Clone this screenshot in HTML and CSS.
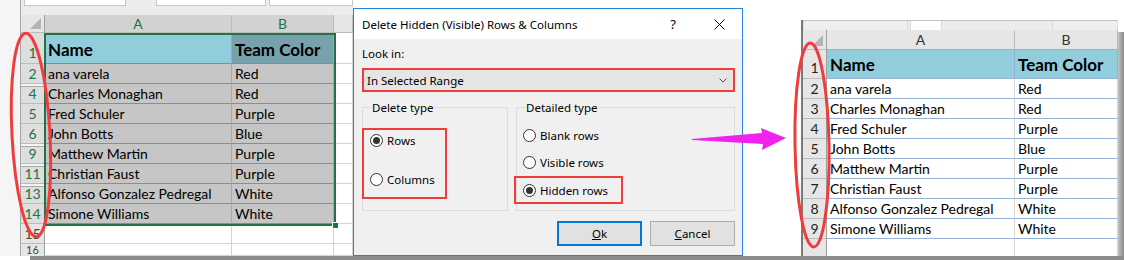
FILE: index.html
```html
<!DOCTYPE html>
<html>
<head>
  <title>Delete Hidden Rows</title>
  <meta charset="UTF-8">
  <link rel="stylesheet" href="styles.css">
</head>
<body>
  <div class="stage">
    <!-- Feuille de départ, avec lignes masquées -->
    <section class="sheet sheet-left">
      <div class="gutter"></div>
      <div class="grid">
        <div class="fbar">
          <span class="fbox b1"></span><span class="fbox b2"></span><span class="fbox b3"></span>
        </div>
        <div class="row head">
          <div class="rh corner"><i class="tri"></i></div>
          <div class="c a">A</div><div class="c b">B</div><div class="c x"></div>
        </div>
        <div class="row r1 sel">
          <div class="rh">1</div><div class="c a active">Name</div><div class="c b">Team Color</div><div class="c x"></div>
        </div>
        <div class="row sel"><div class="rh">2</div><div class="c a">ana varela</div><div class="c b">Red</div><div class="c x"></div></div>
        <div class="row sel"><div class="rh hid">4</div><div class="c a">Charles Monaghan</div><div class="c b">Red</div><div class="c x"></div></div>
        <div class="row sel"><div class="rh">5</div><div class="c a">Fred Schuler</div><div class="c b">Purple</div><div class="c x"></div></div>
        <div class="row sel"><div class="rh">6</div><div class="c a">John Botts</div><div class="c b">Blue</div><div class="c x"></div></div>
        <div class="row sel"><div class="rh hid">9</div><div class="c a">Matthew Martin</div><div class="c b">Purple</div><div class="c x"></div></div>
        <div class="row sel"><div class="rh hid">11</div><div class="c a">Christian Faust</div><div class="c b">Purple</div><div class="c x"></div></div>
        <div class="row sel"><div class="rh hid">13</div><div class="c a">Alfonso Gonzalez Pedregal</div><div class="c b">White</div><div class="c x"></div></div>
        <div class="row sel"><div class="rh">14</div><div class="c a">Simone Williams</div><div class="c b">White</div><div class="c x"></div></div>
        <div class="row"><div class="rh">15</div><div class="c a"></div><div class="c b"></div><div class="c x"></div></div>
        <div class="row last"><div class="rh">16</div><div class="c a"></div><div class="c b"></div><div class="c x"></div></div>
        <div class="selbox"><i class="handle"></i></div>
      </div>
    </section>

    <!-- Boîte de dialogue -->
    <div class="dialog">
      <div class="titlebar">
        <span class="title">Delete Hidden (Visible) Rows &amp; Columns</span>
        <span class="tb-btn">?</span>
        <span class="tb-btn">
          <svg width="11" height="11" viewBox="0 0 11 11"><path d="M0.5 0.5 L10.5 10.5 M10.5 0.5 L0.5 10.5" stroke="#000" stroke-width="1" fill="none"/></svg>
        </span>
      </div>
      <div class="dlg-body">
        <div class="label">Look in:</div>
        <div class="combo mark">
          <span>In Selected Range</span>
          <svg width="8" height="5" viewBox="0 0 8 5"><path d="M0.5 0.5 L4 4 L7.5 0.5" stroke="#555" stroke-width="1" fill="none"/></svg>
        </div>
        <div class="groups">
          <div class="group g-left">
            <span class="g-title">Delete type</span>
            <div class="mark box-type">
              <div class="opt"><i class="radio on"></i>Rows</div>
              <div class="opt"><i class="radio"></i>Columns</div>
            </div>
          </div>
          <div class="group g-right">
            <span class="g-title">Detailed type</span>
            <div class="opt first"><i class="radio"></i>Blank rows</div>
            <div class="opt second"><i class="radio"></i>Visible rows</div>
            <div class="mark box-hidden">
              <div class="opt"><i class="radio on"></i>Hidden rows</div>
            </div>
          </div>
        </div>
        <div class="buttons">
          <div class="btn ok"><span><u>O</u>k</span></div>
          <div class="btn"><span><u>C</u>ancel</span></div>
        </div>
      </div>
    </div>

    <!-- Feuille résultat -->
    <section class="sheet sheet-right">
      <div class="grid">
        <div class="fbar">
          <span class="fbox r-b1"></span><span class="fbox r-b2"></span><span class="fbox r-b3"></span>
        </div>
        <div class="row head">
          <div class="rh corner"><i class="tri"></i></div>
          <div class="c a">A</div><div class="c b">B</div>
        </div>
        <div class="row r1">
          <div class="rh">1</div><div class="c a hdr">Name</div><div class="c b hdr">Team Color</div>
        </div>
        <div class="row"><div class="rh">2</div><div class="c a">ana varela</div><div class="c b">Red</div></div>
        <div class="row"><div class="rh">3</div><div class="c a">Charles Monaghan</div><div class="c b">Red</div></div>
        <div class="row"><div class="rh">4</div><div class="c a">Fred Schuler</div><div class="c b">Purple</div></div>
        <div class="row"><div class="rh">5</div><div class="c a">John Botts</div><div class="c b">Blue</div></div>
        <div class="row"><div class="rh">6</div><div class="c a">Matthew Martin</div><div class="c b">Purple</div></div>
        <div class="row"><div class="rh">7</div><div class="c a">Christian Faust</div><div class="c b">Purple</div></div>
        <div class="row"><div class="rh">8</div><div class="c a">Alfonso Gonzalez Pedregal</div><div class="c b">White</div></div>
        <div class="row"><div class="rh">9</div><div class="c a">Simone Williams</div><div class="c b">White</div></div>
        <div class="row tail"><div class="rh"></div><div class="c a"></div><div class="c b"></div></div>
      </div>
    </section>
    <div class="shadow"></div>
  </div>
  <div class="band"></div>

  <!-- Annotations : ellipses et flèche -->
  <svg class="annot" width="1124" height="260" viewBox="0 0 1124 260">
    <ellipse cx="31" cy="135" rx="19" ry="102" transform="rotate(-3 31 135)" fill="none" stroke="#f23b3b" stroke-width="3"/>
    <ellipse cx="812" cy="145" rx="17" ry="102" transform="rotate(-1 812 145)" fill="none" stroke="#f23b3b" stroke-width="3"/>
    <polygon points="692,139 762,133 761,128 786,138 762,150 763,144 692,140" fill="#f022ee"/>
  </svg>
</body>
</html>
```

FILE: styles.css
```css
body {
  margin: 0;
  width: 1124px;
  height: 260px;
  overflow: hidden;
  position: relative;
  background: #fff;
  font-family: Lato, "Liberation Sans", sans-serif;
  color: #000;
}
.stage {
  display: flex;
  height: 256px;
}
.band {
  height: 4px;
  margin-left: 30px;
  background: #8c8c8c;
}
.annot {
  position: absolute;
  left: 0;
  top: 0;
  pointer-events: none;
}

/* feuilles */
.sheet {
  display: flex;
  flex: none;
  font-size: 14px;
}
.grid {
  position: relative;
  display: flex;
  flex-direction: column;
  flex: 1;
  overflow: hidden;
}
.fbar {
  display: flex;
  flex: none;
  background: #ececec;
}
.fbox {
  display: block;
  background: #fff;
  border: 1px solid #c6c6c6;
  border-top: none;
}
.row {
  display: flex;
  flex: none;
  height: 20px;
}
.rh {
  width: 24px;
  flex: none;
  box-sizing: border-box;
  background: #e6e6e6;
  border-right: 1px solid #9e9e9e;
  border-bottom: 1px solid #bcbcbc;
  text-align: center;
  line-height: 20px;
  color: #444;
}
.c {
  box-sizing: border-box;
  flex: none;
  border-right: 1px solid #d4d4d4;
  border-bottom: 1px solid #d4d4d4;
  padding-left: 3px;
  line-height: 20px;
  white-space: nowrap;
  overflow: hidden;
}
.c.x {
  flex: 1;
}
.head .c {
  background: #e6e6e6;
  border-color: #bcbcbc;
  text-align: center;
  padding-left: 0;
  color: #333;
}
.corner {
  position: relative;
}
.tri {
  position: absolute;
  right: 3px;
  bottom: 3px;
  width: 0;
  height: 0;
  border-left: 11px solid transparent;
  border-bottom: 11px solid #b4b4b4;
}
.r1 {
  height: 31px;
}
.r1 .c,
.r1 .rh {
  line-height: 18px;
  padding-top: 11px;
}
.r1 .c {
  font-weight: bold;
  font-size: 17px;
  line-height: 20px;
  padding-top: 7px;
}

/* feuille gauche */
.sheet-left {
  width: 353px;
}
.gutter {
  width: 20px;
  background: #f5f5f5;
  border-right: 1px solid #a6a6a6;
}
.sheet-left .fbar {
  height: 15px;
}
.sheet-left .fbox {
  height: 5px;
}
.b1 { margin-left: 3px; width: 100px; }
.b2 { margin-left: 30px; width: 108px; }
.b3 { margin-left: 3px; flex: 1; }
.sheet-left .head {
  height: 18px;
}
.sheet-left .head .c,
.sheet-left .head .rh {
  line-height: 17px;
}
.sheet-left .head .a,
.sheet-left .head .b {
  background: #d2d2d2;
  color: #217346;
}
.sheet-left .a { width: 187px; }
.sheet-left .b { width: 102px; }
.sel .rh {
  background: #dedede;
  color: #217346;
}
.rh.hid {
  box-shadow: inset 0 2px 0 #f4f4f4, inset 0 3px 0 #a9a9a9;
}
.sel .c.a,
.sel .c.b {
  background: #c6c6c6;
  border-bottom-color: #7f8fa1;
  border-right-color: #a8a8a8;
}
.sel .c.active {
  background: #92cddc;
}
.r1.sel .c.b {
  background: #77a2ad;
}
.sheet-left .last {
  flex: 1;
}
.sheet-left .last .rh {
  line-height: 12px;
  font-size: 11px;
  border-bottom: none;
}
.selbox {
  position: absolute;
  left: 23px;
  top: 33px;
  width: 292px;
  height: 193px;
  box-sizing: border-box;
  border: 2px solid #217346;
}
.handle {
  position: absolute;
  right: -5px;
  bottom: -5px;
  width: 5px;
  height: 5px;
  background: #217346;
  border: 1px solid #fff;
}

/* boîte de dialogue */
.dialog {
  flex: none;
  width: 390px;
  height: 248px;
  margin-top: 8px;
  box-sizing: border-box;
  border: 1px solid #2b82d9;
  background: #f0f0f0;
  font-family: "Noto Sans", "DejaVu Sans", sans-serif;
  font-size: 11.5px;
}
.titlebar {
  display: flex;
  align-items: center;
  height: 30px;
  padding-left: 8px;
  background: #fff;
}
.title {
  flex: 1;
}
.tb-btn {
  width: 46px;
  display: flex;
  justify-content: center;
  font-size: 13px;
}
.dlg-body {
  padding: 0 7px 0 8px;
  display: flex;
  flex-direction: column;
}
.label {
  margin-top: 8px;
  line-height: 14px;
}
.mark {
  border: 2px solid #f23b3b;
  box-sizing: border-box;
}
.combo {
  margin-top: 7px;
  height: 24px;
  display: flex;
  align-items: center;
  justify-content: space-between;
  padding: 0 6px 0 3px;
  background: #e5e5e5;
}
.groups {
  display: flex;
  gap: 8px;
  margin-top: 15px;
}
.group {
  height: 104px;
  box-sizing: border-box;
  border: 1px solid #dcdcdc;
  display: flex;
  flex-direction: column;
  align-items: flex-start;
}
.g-left {
  width: 146px;
}
.g-right {
  flex: 1;
}
.g-title {
  margin: -8px 0 0 8px;
  padding: 0 1px;
  line-height: 15px;
  background: #f0f0f0;
}
.opt {
  display: flex;
  align-items: center;
  gap: 4px;
  height: 13px;
  white-space: nowrap;
}
.radio {
  width: 13px;
  height: 13px;
  box-sizing: border-box;
  border: 1px solid #333;
  border-radius: 50%;
  background: #fff;
  display: flex;
  align-items: center;
  justify-content: center;
}
.radio.on::after {
  content: "";
  width: 7px;
  height: 7px;
  border-radius: 50%;
  background: #333;
}
.box-type {
  width: 85px;
  height: 71px;
  margin: 13px 0 0 -1px;
  padding: 4px 0 0 6px;
  display: flex;
  flex-direction: column;
  gap: 26px;
}
.g-right .first {
  margin: 14px 0 0 6px;
}
.g-right .second {
  margin: 14px 0 0 6px;
}
.box-hidden {
  width: 109px;
  height: 28px;
  margin: 7px 0 0 -3px;
  padding-left: 7px;
  display: flex;
  align-items: center;
}
.buttons {
  display: flex;
  justify-content: flex-end;
  gap: 8px;
  margin-top: 10px;
}
.btn {
  width: 85px;
  height: 25px;
  box-sizing: border-box;
  border: 1px solid #adadad;
  background: #e1e1e1;
  display: flex;
  align-items: center;
  justify-content: center;
}
.btn.ok {
  border: 2px solid #0078d7;
}

/* feuille droite */
.sheet-right {
  width: 317px;
  margin: 20px 0 0 58px;
  box-sizing: border-box;
  border-left: 2px solid #7a7a7a;
}
.sheet-right .fbar {
  height: 10px;
  border-top: 1px solid #c4c4c4;
  box-sizing: border-box;
}
.sheet-right .fbox {
  height: 9px;
  border-color: #dadada;
}
.r-b1 { width: 103px; margin-left: 0; background: #efefef !important; }
.r-b2 { width: 30px; margin-left: 2px; }
.r-b3 { flex: 1; margin-left: 110px; background: #efefef !important; }
.sheet-right .r1 {
  height: 29px;
}
.sheet-right .r1 .rh {
  padding-top: 9px;
}
.sheet-right .r1 .c {
  padding-top: 5px;
}
.sheet-right .a { width: 188px; }
.sheet-right .b { width: 103px; }
.sheet-right .hdr {
  background: #92cddc;
  border-bottom-color: #95b3d7;
  border-right-color: #95b3d7;
}
.sheet-right .row .c {
  border-bottom-color: #95b3d7;
}
.sheet-right .tail {
  flex: 1;
}
.sheet-right .tail .c,
.sheet-right .tail .rh {
  border-bottom: none;
}
.sheet-right .rh {
  color: #222;
}
.shadow {
  flex: none;
  width: 6px;
  margin-top: 32px;
  background: linear-gradient(to right, #c4c4c4, #8a8a8a);
}
```
